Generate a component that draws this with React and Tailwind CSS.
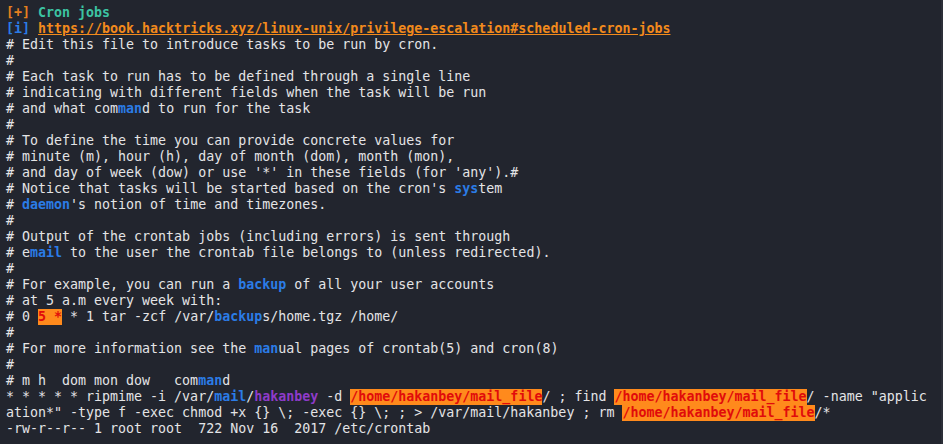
const B = "font-bold text-[#2b7ce6]"; // blue bold
const P = "font-bold text-[#8e3bc9]"; // purple bold
const H = "inline-block h-[16px] align-top font-bold bg-[#ff8a1c] text-[#e10b0b]"; // orange highlight

// each line: array of [text, className?]
const lines = [
  [["[+] ", "font-bold text-[#e5801f]"], ["Cron jobs", "font-bold text-[#3cc3a2]"]],
  [["[i] ", "font-bold text-[#2b7ce6]"], ["https://book.hacktricks.xyz/linux-unix/privilege-escalation#scheduled-cron-jobs", "font-bold text-[#f28a1c] underline"]],
  [["# Edit this file to introduce tasks to be run by cron."]],
  [["#"]],
  [["# Each task to run has to be defined through a single line"]],
  [["# indicating with different fields when the task will be run"]],
  [["# and what com"], ["man", B], ["d to run for the task"]],
  [["#"]],
  [["# To define the time you can provide concrete values for"]],
  [["# minute (m), hour (h), day of month (dom), month (mon),"]],
  [["# and day of week (dow) or use '*' in these fields (for 'any').#"]],
  [["# Notice that tasks will be started based on the cron's "], ["sys", B], ["tem"]],
  [["# "], ["daemon", B], ["'s notion of time and timezones."]],
  [["#"]],
  [["# Output of the crontab jobs (including errors) is sent through"]],
  [["# e"], ["mail", B], [" to the user the crontab file belongs to (unless redirected)."]],
  [["#"]],
  [["# For example, you can run a "], ["backup", B], [" of all your user accounts"]],
  [["# at 5 a.m every week with:"]],
  [["# 0 "], ["5 *", H], [" * 1 tar -zcf /var/"], ["backup", B], ["s/home.tgz /home/"]],
  [["#"]],
  [["# For more information see the "], ["man", B], ["ual pages of crontab(5) and cron(8)"]],
  [["#"]],
  [["# m h  dom mon dow   com"], ["man", B], ["d"]],
  [
    ["* * * * * ripmime -i /var/"],
    ["mail", B],
    ["/"],
    ["hakanbey", P],
    [" -d "],
    ["/home/hakanbey/mail_file", H],
    ["/ ; find "],
    ["/home/hakanbey/mail_file", H],
    ['/ -name "applic'],
  ],
  [
    ['ation*" -type f -exec chmod +x {} \\; -exec {} \\; ; > /var/mail/hakanbey ; rm '],
    ["/home/hakanbey/mail_file", H],
    ["/*"],
  ],
  [["-rw-r--r-- 1 root root  722 Nov 16  2017 /etc/crontab"]],
];

export default function App() {
  return (
    <div className="h-[444px] w-[943px] overflow-hidden bg-[#22252e] border-r-2 border-[#2c2f38]">
      <div
        className="pl-[6px] pt-[5px] text-[13.3px] leading-[16px] text-[#e4e4e6]"
        style={{ fontFamily: '"DejaVu Sans Mono", "Liberation Mono", monospace' }}
      >
        {lines.map((segs, i) => (
          <div key={i} className="h-[16px] whitespace-pre">
            {segs.map(([t, cls], j) => (
              <span key={j} className={cls}>
                {t}
              </span>
            ))}
          </div>
        ))}
      </div>
    </div>
  );
}
